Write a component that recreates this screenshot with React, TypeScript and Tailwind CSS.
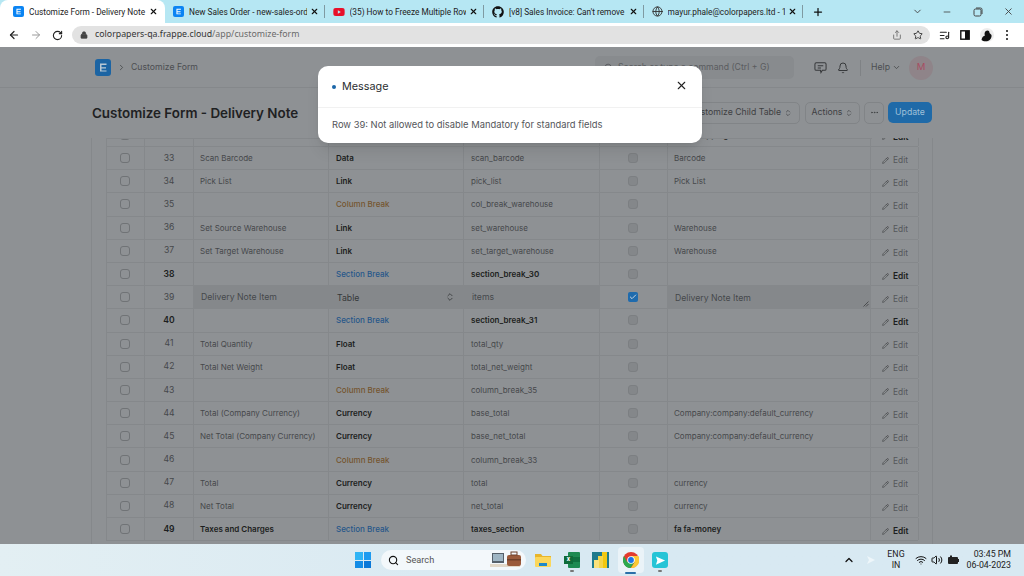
import React from 'react';
import {
  ArrowLeft, ArrowRight, RotateCw, Lock, Share, Star, X, Plus, ChevronDown, ChevronUp, Minus, Search,
  Bell, Pencil, ChevronsUpDown, Check, Wifi, Volume2, Globe, ListMusic, ChevronRight, MoreHorizontal,
} from 'lucide-react';
import { FaGithub, FaYoutube } from 'react-icons/fa';

const ELogo = ({ className }: { className: string }) => (
  <div className={className}>
    <svg viewBox="0 0 16 16" className="h-full w-full">
      <path d="M5 4h6.5v1.5H6.5v2.2h4.5v1.4H6.5v1.9h5V12H5z" fill="currentColor" />
    </svg>
  </div>
);

const tabs = [
  { title: 'New Sales Order - new-sales-ord', icon: <ELogo className="h-[11px] w-[11px] rounded-[2px] bg-[#0b84f3] text-white" /> },
  { title: '(35) How to Freeze Multiple Row', icon: <FaYoutube className="h-[12px] w-[12px] text-[#e8102a]" /> },
  { title: "[v8] Sales Invoice: Can't remove s", icon: <FaGithub className="h-[12px] w-[12px] text-[#111]" /> },
  { title: 'mayur.phale@colorpapers.ltd - 1', icon: <Globe className="h-[11px] w-[11px] text-[#333]" /> },
];

type Row = {
  n: number; label?: string; type: string; name: string; options?: string;
  bold?: boolean; kind?: 'col' | 'sec';
};

const rows: Row[] = [
  { n: 32, type: 'Section Break', name: 'shipping_section', options: 'fa fa-shipping', bold: true, kind: 'sec' },
  { n: 33, label: 'Scan Barcode', type: 'Data', name: 'scan_barcode', options: 'Barcode' },
  { n: 34, label: 'Pick List', type: 'Link', name: 'pick_list', options: 'Pick List' },
  { n: 35, type: 'Column Break', name: 'col_break_warehouse', kind: 'col' },
  { n: 36, label: 'Set Source Warehouse', type: 'Link', name: 'set_warehouse', options: 'Warehouse' },
  { n: 37, label: 'Set Target Warehouse', type: 'Link', name: 'set_target_warehouse', options: 'Warehouse' },
  { n: 38, type: 'Section Break', name: 'section_break_30', bold: true, kind: 'sec' },
  { n: 39, label: 'Delivery Note Item', type: 'Table', name: 'items', options: 'Delivery Note Item' },
  { n: 40, type: 'Section Break', name: 'section_break_31', bold: true, kind: 'sec' },
  { n: 41, label: 'Total Quantity', type: 'Float', name: 'total_qty' },
  { n: 42, label: 'Total Net Weight', type: 'Float', name: 'total_net_weight' },
  { n: 43, type: 'Column Break', name: 'column_break_35', kind: 'col' },
  { n: 44, label: 'Total (Company Currency)', type: 'Currency', name: 'base_total', options: 'Company:company:default_currency' },
  { n: 45, label: 'Net Total (Company Currency)', type: 'Currency', name: 'base_net_total', options: 'Company:company:default_currency' },
  { n: 46, type: 'Column Break', name: 'column_break_33', kind: 'col' },
  { n: 47, label: 'Total', type: 'Currency', name: 'total', options: 'currency' },
  { n: 48, label: 'Net Total', type: 'Currency', name: 'net_total', options: 'currency' },
  { n: 49, label: 'Taxes and Charges', type: 'Section Break', name: 'taxes_section', options: 'fa fa-money', bold: true, kind: 'sec' },
];

const cell = 'flex h-full items-center whitespace-nowrap border-r border-[#85888b]';

function TableRow({ row }: { row: Row }) {
  const editing = row.n === 39;
  const strong = row.bold ? 'font-semibold text-[#1c1e20]' : 'text-[#46484b]';
  const typeColor =
    row.kind === 'sec' ? 'font-medium text-[#27578a]' : row.kind === 'col' ? 'font-medium text-[#75552f]' : 'font-semibold text-[#1c1e20]';
  return (
    <div className="grid h-[23.2px] grid-cols-[38px_49px_135px_135px_136px_68px_203px_48px] border-b border-[#85888b] text-[8px]">
      <div className={`${cell} justify-center`}>
        <div className="mr-[1px] h-[10px] w-[10px] rounded-[3px] border border-[#707376]" />
      </div>
      <div className={`${cell} justify-center text-[8.6px] ${row.bold ? 'font-semibold text-[#1c1e20]' : 'text-[#46484b]'}`}>{row.n}</div>
      {editing ? (
        <>
          <div className={`${cell} bg-[#85888b] pl-[7px] text-[8.7px] text-[#46484b]`}>{row.label}</div>
          <div className={`${cell} justify-between bg-[#85888b] pl-[8px] pr-[8px] text-[8.7px] text-[#36383a]`}>
            <span className="pt-[2px]">{row.type}</span>
            <ChevronsUpDown className="h-[10px] w-[10px] text-[#36383a]" />
          </div>
          <div className={`${cell} bg-[#85888b] pl-[8px] text-[8.7px] text-[#46484b]`}>{row.name}</div>
        </>
      ) : (
        <>
          <div className={`${cell} pl-[6px] ${strong}`}>{row.label}</div>
          <div className={`${cell} pl-[7px] ${typeColor}`}>{row.type}</div>
          <div className={`${cell} pl-[7px] ${strong}`}>{row.name}</div>
        </>
      )}
      <div className={`${cell} justify-center`}>
        {editing ? (
          <div className="mr-[1px] flex h-[10px] w-[10px] items-center justify-center rounded-[2px] bg-[#1f6bad]">
            <Check className="h-[8px] w-[8px] text-[#c9d6e0]" strokeWidth={3} />
          </div>
        ) : (
          <div className="mr-[1px] h-[10px] w-[10px] rounded-[3px] border border-[#7c7f82] bg-[#84878a]" />
        )}
      </div>
      {editing ? (
        <div className={`${cell} relative bg-[#85888b] pl-[7px] pt-[2px] text-[8.7px] text-[#46484b]`}>
          {row.options}
          <svg viewBox="0 0 6 6" className="absolute bottom-[1px] right-[1px] h-[6px] w-[6px] text-[#3c3e40]">
            <path d="M0.5 5.5 5.500.5M3 5.5 5.500 3" stroke="currentColor" strokeWidth="0.8" fill="none" />
          </svg>
        </div>
      ) : (
        <div className={`${cell} pl-[6px] ${strong}`}>{row.options}</div>
      )}
      <div className={`${cell} pl-[11px] pt-[4px] text-[8.4px] ${row.bold ? 'font-semibold text-[#1c1e20]' : 'text-[#55575a]'}`}>
        <Pencil className="mr-[4px] h-[7px] w-[7px] text-[#3c3e40]" />
        Edit
      </div>
    </div>
  );
}

function BrowserChrome() {
  return (
    <div className="shrink-0 font-['Noto_Sans',sans-serif]">
      <div className="flex h-[23px] items-center bg-[#b6e7f3] font-['Roboto',sans-serif] text-[8.3px] text-[#222]">
        <div className="flex h-full w-[165px] shrink-0 items-center rounded-t-[8px] bg-white pl-[13px] pr-[7px]">
          <ELogo className="mr-[5px] h-[11px] w-[11px] shrink-0 rounded-[2px] bg-[#0b84f3] text-white" />
          <span className="flex-1 overflow-hidden whitespace-nowrap pt-[1px]">Customize Form - Delivery Note</span>
          <X className="h-[9px] w-[9px] shrink-0 text-[#111]" strokeWidth={3} />
        </div>
        {tabs.map((tab) => (
          <div key={tab.title} className="flex h-[13px] w-[159.5px] shrink-0 items-center border-r border-[#7f9aa2] pl-[8px] pr-[5px]">
            <span className="mr-[5px] flex shrink-0 items-center">{tab.icon}</span>
            <span className="min-w-0 flex-1 overflow-hidden whitespace-nowrap pt-[1px]">{tab.title}</span>
            <X className="ml-[3px] h-[9px] w-[9px] shrink-0 text-[#111]" strokeWidth={3} />
          </div>
        ))}
        <Plus className="ml-[9px] h-[12px] w-[12px] shrink-0 text-[#111]" strokeWidth={2.5} />
        <div className="ml-auto flex items-center text-[#444]">
          <ChevronDown className="mr-[19px] h-[11px] w-[11px]" />
          <Minus className="mr-[21px] h-[10px] w-[10px]" />
          <svg viewBox="0 0 10 10" className="mr-[20px] h-[10px] w-[10px]" fill="none" stroke="currentColor">
            <rect x="1" y="2" width="7" height="7" rx="1.5" />
            <path d="M3 1h4.500A1.500 1.500 0 0 1 9 2.500V7" />
          </svg>
          <X className="mr-[10px] h-[11px] w-[11px]" />
        </div>
      </div>
      <div className="flex h-[24px] items-center bg-white text-[#222]">
        <ArrowLeft className="ml-[8px] h-[12px] w-[12px] text-[#222]" strokeWidth={2.4} />
        <ArrowRight className="ml-[10px] h-[12px] w-[12px] text-[#9a9a9a]" />
        <RotateCw className="ml-[10px] h-[11px] w-[11px] text-[#222]" strokeWidth={2.4} />
        <div className="ml-[9px] flex h-[18px] w-[858px] items-center rounded-full bg-[#e2e2e2] pl-[8px] pr-[7px] text-[8.8px]">
          <Lock className="mr-[7px] h-[8px] w-[8px] fill-[#444] text-[#444]" />
          <span className="text-[#333]">colorpapers-qa.frappe.cloud</span>
          <span className="text-[#6a6a6a]">/app/customize-form</span>
          <Share className="ml-auto mr-[11px] h-[10px] w-[10px] text-[#666]" />
          <Star className="h-[10px] w-[10px] text-[#333]" strokeWidth={2.2} />
        </div>
        <ListMusic className="ml-[9px] h-[11px] w-[11px] text-[#222]" strokeWidth={2.4} />
        <svg viewBox="0 0 10 10" className="ml-[10px] h-[10px] w-[10px]">
          <rect x="0.8" y="0.8" width="8.4" height="8.4" fill="none" stroke="#111" strokeWidth="1.4" />
          <rect x="5" y="1" width="4" height="8" fill="#111" />
        </svg>
        <svg viewBox="0 0 14 14" className="ml-[10px] h-[14px] w-[14px]">
          <circle cx="7" cy="7" r="7" fill="#ededed" />
          <path d="M1.500 12c.5-3 2-4 3.500-4.500-1-2 0-5 2.500-5 1.500 0 2 1 2 2.500l2 2c.5 2-1 5-3.500 6-2.500.5-5 .5-6.500-1z" fill="#111" />
        </svg>
        <div className="ml-[12px] flex flex-col gap-[2px]">
          <span className="h-[2px] w-[2px] rounded-full bg-[#111]" />
          <span className="h-[2px] w-[2px] rounded-full bg-[#111]" />
          <span className="h-[2px] w-[2px] rounded-full bg-[#111]" />
        </div>
      </div>
    </div>
  );
}

function Taskbar() {
  return (
    <div className="flex h-[32px] shrink-0 items-center bg-gradient-to-r from-[#e3eff3] via-[#d8e9f2] to-[#d8e9f2] font-['Roboto',sans-serif]">
      <div className="ml-[355px] grid h-[16px] w-[16px] shrink-0 grid-cols-2 gap-[1px]">
        <span className="bg-[#2fb4f5]" />
        <span className="bg-[#1d9bf0]" />
        <span className="bg-[#148ce6]" />
        <span className="bg-[#0a78d8]" />
      </div>
      <div className="relative ml-[10px] flex h-[20px] w-[145px] shrink-0 items-center rounded-full bg-[#f3f8fb] pl-[7px] text-[9.2px] text-[#555]">
        <Search className="mr-[7px] h-[11px] w-[11px] text-[#111]" strokeWidth={2.4} />
        Search
        <svg viewBox="0 0 36 20" className="absolute right-0 top-0 h-[20px] w-[36px]">
          <rect x="0" y="14" width="30" height="3" fill="#e2d8c8" />
          <rect x="2" y="3" width="12" height="10" fill="#55606a" />
          <rect x="3" y="4" width="10" height="7" fill="#9fb6c4" />
          <rect x="17" y="5" width="14" height="11" rx="2" fill="#9a5a3a" />
          <rect x="21" y="2" width="6" height="3" fill="none" stroke="#6e3f28" />
          <rect x="17" y="9" width="14" height="1.5" fill="#6e3f28" />
        </svg>
      </div>
      <svg viewBox="0 0 16 14" className="ml-[9px] h-[14px] w-[16px] shrink-0">
        <path d="M0 1h6l1.500 2H16v2H0z" fill="#e8b62c" />
        <rect x="0" y="4" width="16" height="10" rx="1" fill="#fbd75b" />
        <rect x="4" y="10" width="8" height="3" fill="#1e88c8" />
      </svg>
      <div className="relative ml-[13px] h-[16px] w-[16px] shrink-0">
        <div className="absolute right-0 top-0 h-[16px] w-[12px] rounded-[1px] bg-[#1d8a52]" />
        <div className="absolute right-0 top-[5px] h-[5px] w-[12px] bg-[#107040]" />
        <div className="absolute left-0 top-[4px] flex h-[8px] w-[9px] items-center justify-center bg-[#0f6b3a] text-[6.5px] font-bold text-white">x</div>
        <span className="absolute bottom-[-4px] left-[6px] h-[2px] w-[4px] rounded-full bg-[#777]" />
      </div>
      <svg viewBox="0 0 17 16" className="ml-[12px] h-[16px] w-[17px] shrink-0">
        <rect width="17" height="16" fill="#1f7a8c" />
        <rect x="10" y="0" width="5" height="16" fill="#f2c811" />
        <rect x="6" y="4" width="5" height="12" fill="#f5d54a" />
        <rect x="2" y="8" width="5" height="8" fill="#fbe27c" />
      </svg>
      <div className="relative ml-[9px] flex h-[26px] w-[26px] shrink-0 items-center justify-center rounded-[4px] bg-[#eaf3f8]">
        <svg viewBox="0 0 16 16" className="h-[16px] w-[16px]">
          <circle cx="8" cy="8" r="8" fill="#e33b2e" />
          <path d="M8 4h7.300A8 8 0 0 1 8 16l3.500-6z" fill="#fcc934" />
          <path d="M1 4 7.500 16A8 8 0 0 1 1 4z" fill="#2da94f" />
          <path d="M8 8 1 12a8 8 0 0 0 6.500 4L11.500 10z" fill="#2da94f" />
          <circle cx="8" cy="8" r="3.800" fill="#fff" />
          <circle cx="8" cy="8" r="2.900" fill="#1a73e8" />
        </svg>
        <span className="absolute bottom-[-1px] left-[7px] h-[2px] w-[11px] rounded-full bg-[#2a6fa8]" />
      </div>
      <div className="relative ml-[8px] flex h-[16px] w-[16px] shrink-0 items-center justify-center rounded-[3px] bg-[#25c4d6]">
        <svg viewBox="0 0 12 12" className="h-[11px] w-[11px]"><path d="M1 1.500 11 6 1 10.500 2.500 6z" fill="#fff" /></svg>
        <span className="absolute bottom-[-4px] left-[6px] h-[2px] w-[4px] rounded-full bg-[#777]" />
      </div>
      <ChevronUp className="ml-[175px] h-[12px] w-[12px] shrink-0 text-[#111]" strokeWidth={2.6} />
      <svg viewBox="0 0 10 10" className="ml-[11px] h-[10px] w-[10px] shrink-0"><path d="M1 1 9 5 1 9 3 5z" fill="#eef6fa" /></svg>
      <div className="ml-[6px] flex w-[28px] shrink-0 flex-col items-center text-[8.8px] leading-[11px] text-[#222]">
        <span>ENG</span>
        <span>IN</span>
      </div>
      <Wifi className="ml-[5px] h-[12px] w-[12px] shrink-0 text-[#111]" />
      <Volume2 className="ml-[4px] h-[12px] w-[12px] shrink-0 text-[#111]" />
      <svg viewBox="0 0 12 10" className="ml-[4px] h-[10px] w-[12px] shrink-0">
        <rect x="1" y="2" width="10" height="7" rx="1" fill="#222" />
        <rect x="11" y="4" width="1" height="3" fill="#222" />
        <path d="M3 0.500h2v2H3z" fill="#222" />
      </svg>
      <div className="ml-auto mr-[13px] flex flex-col items-end whitespace-nowrap text-[8.8px] leading-[11px] text-[#222]">
        <span>03:45 PM</span>
        <span>06-04-2023</span>
      </div>
    </div>
  );
}

export default function App() {
  return (
    <div className="flex h-screen w-full flex-col overflow-hidden bg-[#8e9194]">
      <BrowserChrome />

      <div className="relative flex min-h-0 flex-1 flex-col font-['Inter',sans-serif]">
        {/* Navbar */}
        <div className="flex h-[41px] shrink-0 items-center border-b border-[#85888b] pl-[95px] pr-[91px] pt-[1px]">
          <ELogo className="h-[17px] w-[16px] rounded-[3px] bg-[#1c64a3] text-[#b7c7d4]" />
          <ChevronRight className="ml-[6px] h-[9px] w-[9px] text-[#3f4143]" />
          <span className="ml-[5px] text-[8.7px] text-[#4c4e51]">Customize Form</span>
          <div className="ml-auto flex h-[23px] w-[199px] items-center rounded-[5px] bg-[#888b8e] pl-[9px] text-[8.7px] text-[#5a5c5f]">
            <Search className="mr-[5px] h-[9px] w-[9px] text-[#4c4e51]" />
            Search or type a command (Ctrl + G)
          </div>
          <svg viewBox="0 0 14 14" className="ml-[20px] h-[13px] w-[13px] text-[#37393b]" fill="none" stroke="currentColor" strokeWidth="1.1">
            <path d="M2.500 2h9A1.500 1.500 0 0 1 13 3.500v5A1.500 1.500 0 0 1 11.500 10H9l-1.500 2.500L7 10H2.500A1.500 1.500 0 0 1 1 8.500v-5A1.500 1.500 0 0 1 2.500 2z" />
            <path d="M4 5h6M4 7.500h3.500" />
          </svg>
          <Bell className="ml-[10px] h-[12px] w-[12px] text-[#37393b]" />
          <div className="ml-[11px] h-[16px] w-px bg-[#7f8285]" />
          <span className="ml-[10px] text-[8.7px] text-[#4c4e51]">Help</span>
          <ChevronDown className="ml-[2px] h-[9px] w-[9px] text-[#3f4143]" />
          <div className="ml-[8px] flex h-[24px] w-[24px] shrink-0 items-center justify-center rounded-full bg-[#8f8489] text-[9.5px] text-[#a84d62]">M</div>
        </div>

        {/* Page head */}
        <div className="flex h-[49.5px] shrink-0 items-center pl-[92px] pr-[92px]">
          <h1 className="text-[13.4px] font-semibold text-[#1f2123]">Customize Form - Delivery Note</h1>
          <div className="ml-auto flex items-center text-[8.7px] text-[#3e4042]">
            <div className="flex h-[22px] items-center gap-[3px] rounded-[5px] border border-[#818487] px-[7px]">
              Customize Child Table
              <ChevronsUpDown className="h-[8px] w-[8px]" />
            </div>
            <div className="ml-[5px] flex h-[22px] w-[55px] items-center justify-center gap-[3px] rounded-[5px] border border-[#818487]">
              Actions
              <ChevronsUpDown className="h-[8px] w-[8px]" />
            </div>
            <div className="ml-[4px] flex h-[22px] w-[20px] items-center justify-center rounded-[5px] border border-[#818487]">
              <MoreHorizontal className="h-[9px] w-[9px]" />
            </div>
            <div className="ml-[4px] flex h-[21px] w-[44px] items-center justify-center rounded-[5px] bg-[#1f6aa8] text-[#9fc0d8]">Update</div>
          </div>
        </div>

        {/* Table card */}
        <div className="relative ml-[91px] mr-[91px] min-h-0 flex-1 overflow-hidden border-x border-[#85888b] px-[14px]">
          <div className="-mt-[13.7px] border-l border-[#85888b]">
            {rows.map((row) => (
              <TableRow key={row.n} row={row} />
            ))}
          </div>
          <div className="absolute left-[14px] right-[60px] top-[0.5px] h-px bg-[#85888b]" />
        </div>

        {/* Message dialog */}
        <div className="absolute left-[318px] top-[19px] w-[384px] overflow-hidden rounded-[10px] bg-white shadow-lg">
          <div className="flex h-[42px] items-center border-b border-[#f1f1f1] pl-[14px] pr-[14px] pt-[1px]">
            <span className="mr-[6px] h-[4px] w-[4px] rounded-full bg-[#1b66a8]" />
            <span className="text-[10.8px] text-[#2b2d30]">Message</span>
            <X className="ml-auto mb-[3px] h-[13px] w-[13px] text-[#222]" />
          </div>
          <div className="flex h-[35px] items-center pl-[14px] text-[9.4px] text-[#54565a]">
            Row 39: Not allowed to disable Mandatory for standard fields
          </div>
        </div>
      </div>

      <Taskbar />
    </div>
  );
}
